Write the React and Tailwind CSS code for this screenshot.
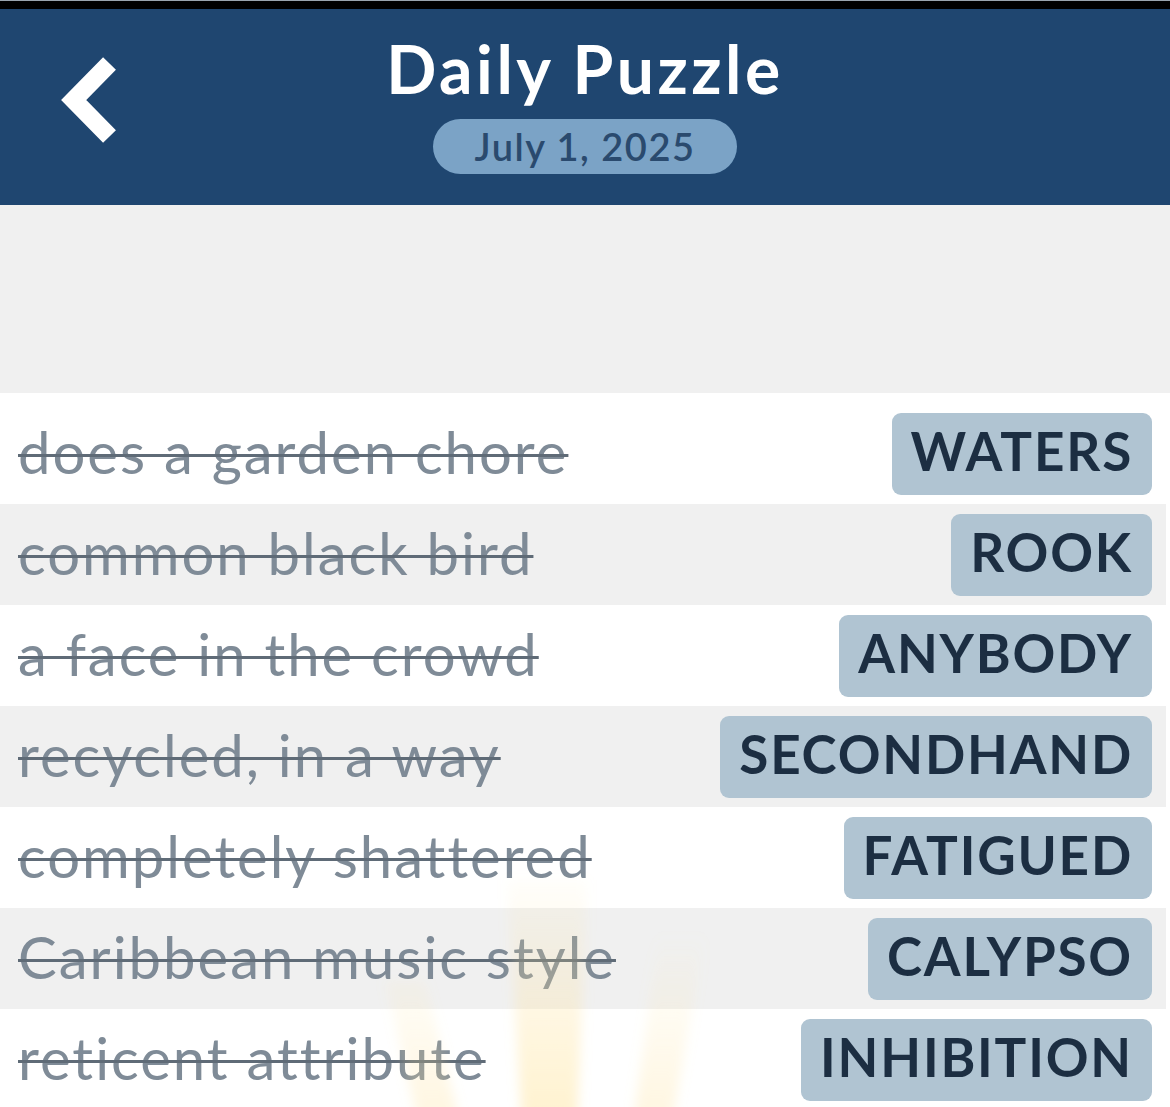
import React from "react";

const clues = [
  { clue: "does a garden chore", answer: "WATERS" },
  { clue: "common black bird", answer: "ROOK" },
  { clue: "a face in the crowd", answer: "ANYBODY" },
  { clue: "recycled, in a way", answer: "SECONDHAND" },
  { clue: "completely shattered", answer: "FATIGUED" },
  { clue: "Caribbean music style", answer: "CALYPSO" },
  { clue: "reticent attribute", answer: "INHIBITION" },
];

function BackChevron() {
  return (
    <svg width="80" height="120" viewBox="0 0 80 120" className="absolute left-[50px] top-[31px]">
      <path d="M59.5 23.5 L23.7 60 L59.5 96.5" fill="none" stroke="#ffffff" strokeWidth="18" strokeLinejoin="miter" strokeLinecap="butt" />
    </svg>
  );
}

function Rays() {
  // faint sunburst glowing up from below the list
  return (
    <svg className="pointer-events-none absolute left-0 top-0 h-[714px] w-[1170px]" viewBox="0 0 1170 714">
      <defs>
        <filter id="soft" x="-20%" y="-20%" width="140%" height="140%">
          <feGaussianBlur stdDeviation="6" />
        </filter>
        <linearGradient id="fade" gradientUnits="userSpaceOnUse" x1="0" y1="460" x2="0" y2="714">
          <stop offset="0" stopColor="#ffe39a" stopOpacity="0" />
          <stop offset="1" stopColor="#ffe39a" stopOpacity="0.45" />
        </linearGradient>
        <linearGradient id="fadeSoft" gradientUnits="userSpaceOnUse" x1="0" y1="540" x2="0" y2="714">
          <stop offset="0" stopColor="#ffe39a" stopOpacity="0" />
          <stop offset="1" stopColor="#ffe39a" stopOpacity="0.28" />
        </linearGradient>
      </defs>
      <g filter="url(#soft)">
        <polygon points="507,487 587,487 577,730 522,730" fill="url(#fade)" />
        <polygon points="667,474 717,474 672,730 633,730" fill="url(#fadeSoft)" />
        <polygon points="385,587 425,587 460,730 418,730" fill="url(#fadeSoft)" />
      </g>
    </svg>
  );
}

export default function App() {
  return (
    <div className="min-h-[1107px] w-[1170px] overflow-hidden bg-white" style={{ fontFamily: "Lato, 'Noto Sans', sans-serif" }}>
      <div className="h-[1px] bg-[#9aa4ae]" />
      <div className="h-[8px] bg-black" />
      <header className="relative flex h-[196px] flex-col items-center bg-[#1f4670] pt-[22px]">
        <BackChevron />
        <h1 className="text-[66px] font-bold leading-[76px] tracking-[3.5px] text-white">Daily Puzzle</h1>
        <div className="mt-[12px] flex h-[55px] w-[304px] items-center justify-center rounded-full bg-[#7ba3c6]">
          <span className="text-[38px] font-semibold tracking-[1.5px] text-[#2a4a6e]">July 1, 2025</span>
        </div>
      </header>
      <div className="h-[188px] bg-[#f0f0f0]" />
      <div className="relative pt-[10px]">
        {clues.map((c, i) => (
          <div
            key={c.answer}
            className={`mr-[4px] flex h-[101px] items-center justify-between pl-[18px] pr-[14px] ${i % 2 === 1 ? "bg-[#f0f0f0]" : "bg-white"}`}
          >
            <span className="-mt-[4px] text-[58px] leading-none tracking-[2px] text-[#7f8b97] line-through decoration-[#5f6b77] decoration-[3px]">
              {c.clue}
            </span>
            <span className="flex h-[82px] items-center rounded-[9px] bg-[#b0c4d2] px-[19px] pb-[5px] text-[53px] font-bold tracking-[1.8px] text-[#1c2e42]">
              {c.answer}
            </span>
          </div>
        ))}
        <Rays />
      </div>
    </div>
  );
}
